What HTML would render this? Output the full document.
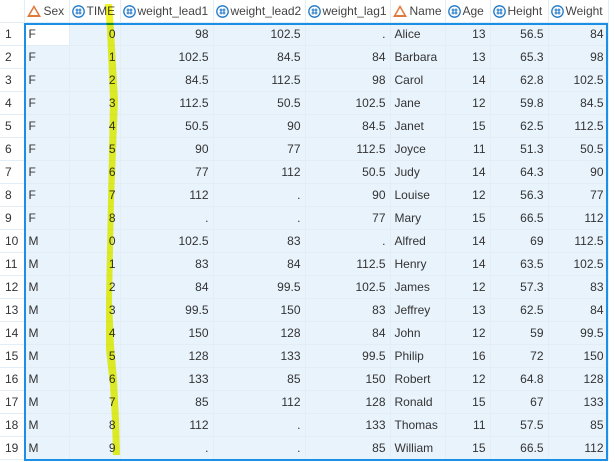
<!DOCTYPE html><html><head><style>
body{margin:0;width:615px;height:462px;background:#fff;font-family:"Liberation Sans",sans-serif;font-size:12px;color:#333;position:relative;overflow:hidden}
table{border-collapse:collapse;position:absolute;left:0;top:0;table-layout:fixed;width:608px}
td,th{padding:0 4px;height:22px;border:1px solid #e3edf6;white-space:nowrap;overflow:hidden}
th{font-weight:normal;text-align:left;height:22px;border-top:none;background:#fff;color:#444;padding:0 2px}
td{background:#e8f3fc;text-align:right}
td.l{text-align:left}
td.n{background:#fff;text-align:left;padding-left:5px;border-left:none}
tr.first td.s{background:#fff}
svg.ic{vertical-align:-3px;margin-right:2px}
.tri{display:inline-block;width:0;height:0;border-left:7px solid transparent;border-right:7px solid transparent;border-bottom:12px solid #e07a3c;vertical-align:-2px;margin-right:3px;position:relative}
.tri:after{content:"";position:absolute;left:-4px;top:3px;width:0;height:0;border-left:4px solid transparent;border-right:4px solid transparent;border-bottom:7px solid #fff}
#b{position:absolute;left:24px;top:23px;width:580px;height:434px;border:2px solid #1b8fe6}
</style></head><body>
<svg width="0" height="0" style="position:absolute"><defs><g id="h"><circle cx="6.5" cy="6.5" r="5.7" fill="none" stroke="#1e78c8" stroke-width="1.3"/><path d="M5 3.5V9.5M8 3.5V9.5M3.5 5H9.5M3.5 8H9.5" stroke="#1e78c8" stroke-width="1.1" fill="none"/></g></defs></svg>
<table>
<colgroup><col style="width:24px"><col style="width:45px"><col style="width:51px"><col style="width:93px"><col style="width:92px"><col style="width:85px"><col style="width:55px"><col style="width:45px"><col style="width:58px"><col style="width:60px"></colgroup>
<tr><th style="border-left:none"></th><th><span class="tri"></span>Sex</th><th><svg class="ic" width="13" height="13"><use href="#h"/></svg>TIME</th><th><svg class="ic" width="13" height="13"><use href="#h"/></svg>weight_lead1</th><th><svg class="ic" width="13" height="13"><use href="#h"/></svg>weight_lead2</th><th><svg class="ic" width="13" height="13"><use href="#h"/></svg>weight_lag1</th><th><span class="tri"></span>Name</th><th><svg class="ic" width="13" height="13"><use href="#h"/></svg>Age</th><th><svg class="ic" width="13" height="13"><use href="#h"/></svg>Height</th><th><svg class="ic" width="13" height="13"><use href="#h"/></svg>Weight</th></tr>
<tr class="first"><td class="n">1</td><td class="l s">F</td><td>0</td><td>98</td><td>102.5</td><td>.</td><td class="l">Alice</td><td>13</td><td>56.5</td><td>84</td></tr>
<tr><td class="n">2</td><td class="l">F</td><td>1</td><td>102.5</td><td>84.5</td><td>84</td><td class="l">Barbara</td><td>13</td><td>65.3</td><td>98</td></tr>
<tr><td class="n">3</td><td class="l">F</td><td>2</td><td>84.5</td><td>112.5</td><td>98</td><td class="l">Carol</td><td>14</td><td>62.8</td><td>102.5</td></tr>
<tr><td class="n">4</td><td class="l">F</td><td>3</td><td>112.5</td><td>50.5</td><td>102.5</td><td class="l">Jane</td><td>12</td><td>59.8</td><td>84.5</td></tr>
<tr><td class="n">5</td><td class="l">F</td><td>4</td><td>50.5</td><td>90</td><td>84.5</td><td class="l">Janet</td><td>15</td><td>62.5</td><td>112.5</td></tr>
<tr><td class="n">6</td><td class="l">F</td><td>5</td><td>90</td><td>77</td><td>112.5</td><td class="l">Joyce</td><td>11</td><td>51.3</td><td>50.5</td></tr>
<tr><td class="n">7</td><td class="l">F</td><td>6</td><td>77</td><td>112</td><td>50.5</td><td class="l">Judy</td><td>14</td><td>64.3</td><td>90</td></tr>
<tr><td class="n">8</td><td class="l">F</td><td>7</td><td>112</td><td>.</td><td>90</td><td class="l">Louise</td><td>12</td><td>56.3</td><td>77</td></tr>
<tr><td class="n">9</td><td class="l">F</td><td>8</td><td>.</td><td>.</td><td>77</td><td class="l">Mary</td><td>15</td><td>66.5</td><td>112</td></tr>
<tr><td class="n">10</td><td class="l">M</td><td>0</td><td>102.5</td><td>83</td><td>.</td><td class="l">Alfred</td><td>14</td><td>69</td><td>112.5</td></tr>
<tr><td class="n">11</td><td class="l">M</td><td>1</td><td>83</td><td>84</td><td>112.5</td><td class="l">Henry</td><td>14</td><td>63.5</td><td>102.5</td></tr>
<tr><td class="n">12</td><td class="l">M</td><td>2</td><td>84</td><td>99.5</td><td>102.5</td><td class="l">James</td><td>12</td><td>57.3</td><td>83</td></tr>
<tr><td class="n">13</td><td class="l">M</td><td>3</td><td>99.5</td><td>150</td><td>83</td><td class="l">Jeffrey</td><td>13</td><td>62.5</td><td>84</td></tr>
<tr><td class="n">14</td><td class="l">M</td><td>4</td><td>150</td><td>128</td><td>84</td><td class="l">John</td><td>12</td><td>59</td><td>99.5</td></tr>
<tr><td class="n">15</td><td class="l">M</td><td>5</td><td>128</td><td>133</td><td>99.5</td><td class="l">Philip</td><td>16</td><td>72</td><td>150</td></tr>
<tr><td class="n">16</td><td class="l">M</td><td>6</td><td>133</td><td>85</td><td>150</td><td class="l">Robert</td><td>12</td><td>64.8</td><td>128</td></tr>
<tr><td class="n">17</td><td class="l">M</td><td>7</td><td>85</td><td>112</td><td>128</td><td class="l">Ronald</td><td>15</td><td>67</td><td>133</td></tr>
<tr><td class="n">18</td><td class="l">M</td><td>8</td><td>112</td><td>.</td><td>133</td><td class="l">Thomas</td><td>11</td><td>57.5</td><td>85</td></tr>
<tr><td class="n">19</td><td class="l">M</td><td>9</td><td>.</td><td>.</td><td>85</td><td class="l">William</td><td>15</td><td>66.5</td><td>112</td></tr>
</table>
<div id="b"></div>
<svg style="position:absolute;left:0;top:0" width="615" height="462"><polygon points="105,4 112,4 114,30 118,100 116,150 114,200 113,250 112,300 114,345 117,380 119,420 120,455 113,455 112,420 110,385 106,350 106,300 107,250 108,200 109,150 110,100 107,30" fill="#f0f500" fill-opacity="0.85" style="mix-blend-mode:multiply"/></svg>
</body></html>
